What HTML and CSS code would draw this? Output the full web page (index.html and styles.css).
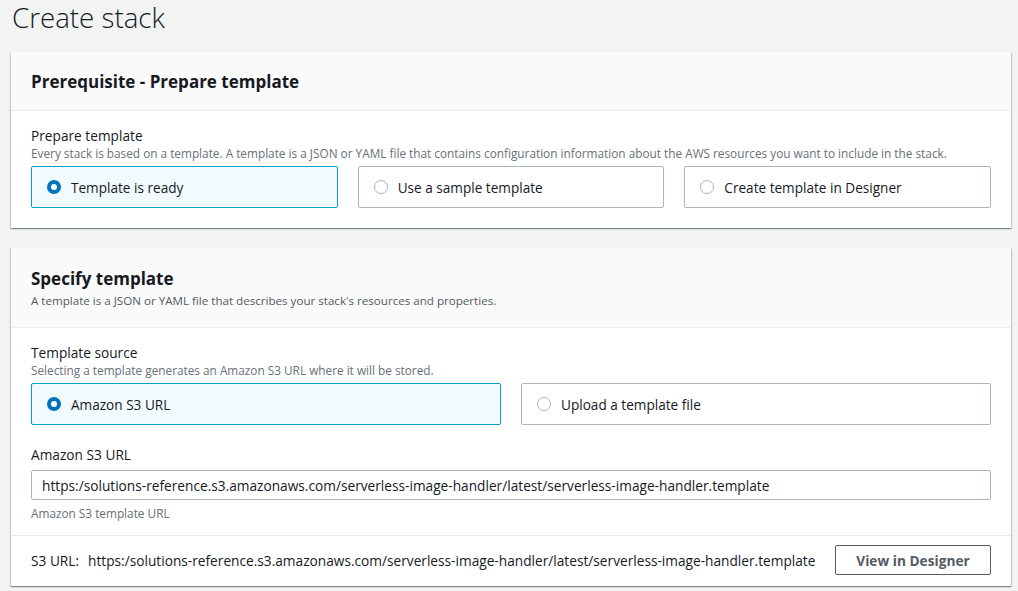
FILE: index.html
```html
<!DOCTYPE html>
<html lang="en">
<head>
<meta charset="utf-8">
<title>Create stack</title>
<link rel="stylesheet" href="styles.css">
</head>
<body>
<div class="page">
  <h1 class="page-title">Create stack</h1>

  <section class="panel panel-first">
    <header class="panel-header">
      <h2 class="panel-title">Prerequisite - Prepare template</h2>
    </header>
    <div class="panel-body">
      <div class="field">
        <div class="label">Prepare template</div>
        <div class="desc">Every stack is based on a template. A template is a JSON or YAML file that contains configuration information about the AWS resources you want to include in the stack.</div>
        <div class="tiles tiles-3">
          <div class="tile selected"><span class="radio on"></span><span class="tile-text">Template is ready</span></div>
          <div class="tile"><span class="radio"></span><span class="tile-text">Use a sample template</span></div>
          <div class="tile"><span class="radio"></span><span class="tile-text">Create template in Designer</span></div>
        </div>
      </div>
    </div>
  </section>

  <section class="panel">
    <header class="panel-header">
      <h2 class="panel-title">Specify template</h2>
      <div class="header-desc">A template is a JSON or YAML file that describes your stack's resources and properties.</div>
    </header>
    <div class="panel-body panel-body-second">
      <div class="field">
        <div class="label">Template source</div>
        <div class="desc">Selecting a template generates an Amazon S3 URL where it will be stored.</div>
        <div class="tiles tiles-2">
          <div class="tile selected"><span class="radio on"></span><span class="tile-text">Amazon S3 URL</span></div>
          <div class="tile"><span class="radio"></span><span class="tile-text">Upload a template file</span></div>
        </div>
      </div>
      <div class="field field-url">
        <div class="label">Amazon S3 URL</div>
        <div class="input">https:/solutions-reference.s3.amazonaws.com/serverless-image-handler/latest/serverless-image-handler.template</div>
        <div class="hint">Amazon S3 template URL</div>
      </div>
    </div>
    <footer class="panel-footer">
      <div class="s3url"><span class="s3-key">S3 URL:</span>https:/solutions-reference.s3.amazonaws.com/serverless-image-handler/latest/serverless-image-handler.template</div>
      <button class="btn">View in Designer</button>
    </footer>
  </section>
</div>
</body>
</html>
```

FILE: styles.css
```css
* { box-sizing: border-box; }
html, body { margin: 0; padding: 0; }
body {
  background: #f2f3f3;
  font-family: "Open Sans", "Noto Sans", sans-serif;
  color: #16191f;
  width: 1018px;
  height: 591px;
  overflow: hidden;
}
.page {
  padding: 0 7px 0 11px;
}
.page-title {
  margin: 0;
  font-size: 27.7px;
  font-weight: 300;
  line-height: 34px;
  padding: 0 0 18px 1px;
  color: #16191f;
}
.panel {
  background: #fff;
  box-shadow: 0 1px 1px 0 rgba(0, 28, 36, 0.3), 1px 1px 1px 0 rgba(0, 28, 36, 0.15), -1px 1px 1px 0 rgba(0, 28, 36, 0.15);
  margin-bottom: 20px;
}
.panel-header {
  background: #fafafa;
  border-bottom: 1px solid #eaeded;
  padding: 20px 20px 18px;
}
.panel-first .panel-header { padding: 19px 20px 17px; }
.panel-title {
  margin: 0;
  font-size: 17px;
  font-weight: 700;
  line-height: 22px;
}
.header-desc {
  font-size: 11.6px;
  color: #545b64;
  line-height: 16px;
  margin-top: 3px;
}
.panel-body {
  padding: 16px 20px 20px;
}
.panel-body-second {
  padding-bottom: 14px;
}
.label {
  font-size: 13.7px;
  line-height: 18px;
}
.desc {
  font-size: 11.8px;
  line-height: 17px;
  color: #687078;
  margin-bottom: 4px;
}
.tiles {
  display: grid;
  gap: 20px;
}
.tiles-3 { grid-template-columns: 1fr 1fr 1fr; }
.tiles-2 { grid-template-columns: 1fr 1fr; }
.tile {
  height: 42px;
  border: 1px solid #aab7b8;
  border-radius: 2px;
  display: flex;
  align-items: center;
  padding-left: 15px;
  font-size: 13.6px;
}
.tile.selected {
  border-color: #00a1c9;
  background: #f1faff;
}
.radio {
  width: 14px;
  height: 14px;
  border-radius: 50%;
  border: 1px solid #aab7b8;
  background: #fff;
  margin-right: 10px;
  flex: none;
}
.radio.on {
  border: 4px solid #0073bb;
}
.field-url { margin-top: 21px; }
.field-url .label { margin-bottom: 6px; }
.input {
  height: 30px;
  border: 1px solid #aab7b8;
  border-radius: 2px;
  padding: 0 10px;
  display: flex;
  align-items: center;
  font-size: 13.7px;
}
.hint {
  font-size: 11.8px;
  color: #687078;
  margin-top: 5px;
  line-height: 16px;
}
.panel-footer {
  border-top: 1px solid #eaeded;
  padding: 9px 20px 11px;
  display: flex;
  align-items: center;
  justify-content: space-between;
  font-size: 13.7px;
}
.s3-key { margin-right: 9px; }
.btn {
  font-family: inherit;
  height: 30px;
  width: 156px;
  background: #fff;
  border: 1px solid #545b64;
  border-radius: 2px;
  color: #545b64;
  font-weight: 700;
  font-size: 13.7px;
  padding: 0;
}
```
